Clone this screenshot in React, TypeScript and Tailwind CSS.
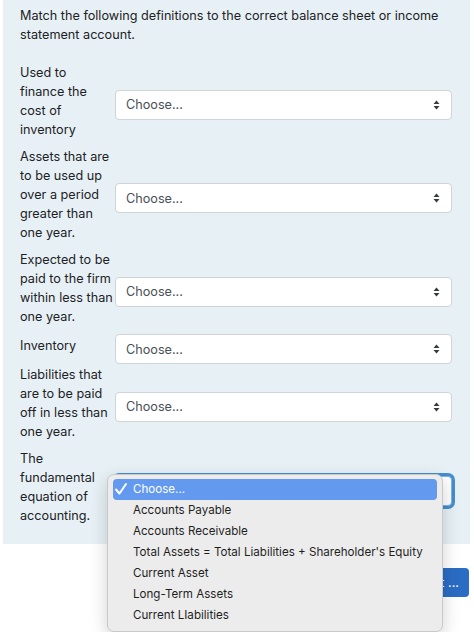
import React from "react";

const rows: { lines: string[]; focused?: boolean }[] = [
  { lines: ["Used to", "finance the", "cost of", "inventory"] },
  {
    lines: [
      "Assets that are",
      "to be used up",
      "over a period",
      "greater than",
      "one year.",
    ],
  },
  {
    lines: ["Expected to be", "paid to the firm", "within less than", "one year."],
  },
  { lines: ["Inventory"] },
  {
    lines: ["Liabilities that", "are to be paid", "off in less than", "one year."],
  },
  {
    lines: ["The", "fundamental", "equation of", "accounting."],
    focused: true,
  },
];

const options = [
  "Choose...",
  "Accounts Payable",
  "Accounts Receivable",
  "Total Assets = Total Liabilities + Shareholder's Equity",
  "Current Asset",
  "Long-Term Assets",
  "Current LIabilities",
];

const Arrows = () => (
  <svg width="7" height="10" viewBox="0 0 7 10" className="shrink-0">
    <path d="M3.5 0.5 L6.5 4 H0.5 Z" fill="#343a40" />
    <path d="M3.5 9.5 L6.5 6 H0.5 Z" fill="#343a40" />
  </svg>
);

const Select = ({ focused }: { focused?: boolean }) => (
  <div className="relative flex-1">
    <div
      className={`flex h-[30px] items-center justify-between rounded-[4px] border bg-white pl-[10px] pr-[11px] text-[#495057] ${
        focused
          ? "border-[#7fb0e6] ring-[3px] ring-[#0f6cbf]/75"
          : "border-[#ced4da]"
      }`}
    >
      <span>Choose...</span>
      <Arrows />
    </div>
    {focused ? (
      <div className="absolute left-[-8px] top-[-2px] z-10 w-[336px] rounded-[7px] border border-[#c9c9c9] bg-[#ececec] px-[5px] pb-[5px] pt-[4px] text-[11.6px] text-[#1f1f1f] shadow-[0_6px_18px_rgba(0,0,0,0.18)]">
        {options.map((o, i) => (
          <div
            key={o}
            className={`flex h-[21px] items-center whitespace-nowrap rounded-[4px] ${
              i === 0 ? "bg-[#6399ee] text-white" : ""
            }`}
          >
            <svg
              width="20"
              height="14"
              viewBox="0 0 20 14"
              className="shrink-0"
            >
              {i === 0 ? (
                <path
                  d="M3 7.5 L6.5 11.5 L13 2"
                  fill="none"
                  stroke="white"
                  strokeWidth="2"
                  strokeLinecap="round"
                  strokeLinejoin="round"
                />
              ) : null}
            </svg>
            <span>{o}</span>
          </div>
        ))}
      </div>
    ) : null}
  </div>
);

export default function App() {
  return (
    <div className="min-h-[632px] w-[474px] bg-white font-['Inter',sans-serif] text-[12.66px] leading-[19px] text-[#1d2125]">
      <div className="ml-[3px] w-[467px] bg-[#e7f1f5] pb-[12px] pl-[17px] pr-[18px] pt-[6px]">
        <p className="mb-[19px]">
          Match the following definitions to the correct balance sheet or
          income
          <br />
          statement account.
        </p>
        <div className="flex flex-col gap-px">
          {rows.map((r, i) => (
            <div key={i} className="flex items-center">
              <div className="w-[95px] shrink-0 pb-[7px]">
                {r.lines.map((l) => (
                  <div key={l} className="whitespace-nowrap">
                    {l}
                  </div>
                ))}
              </div>
              <Select focused={r.focused} />
            </div>
          ))}
        </div>
      </div>
      <div className="flex justify-end pr-[5px] pt-[24px]">
        <button className="h-[29px] rounded-[4px] bg-[#2b6cc4] px-[10px] text-white">
          Finish attempt ...
        </button>
      </div>
    </div>
  );
}
